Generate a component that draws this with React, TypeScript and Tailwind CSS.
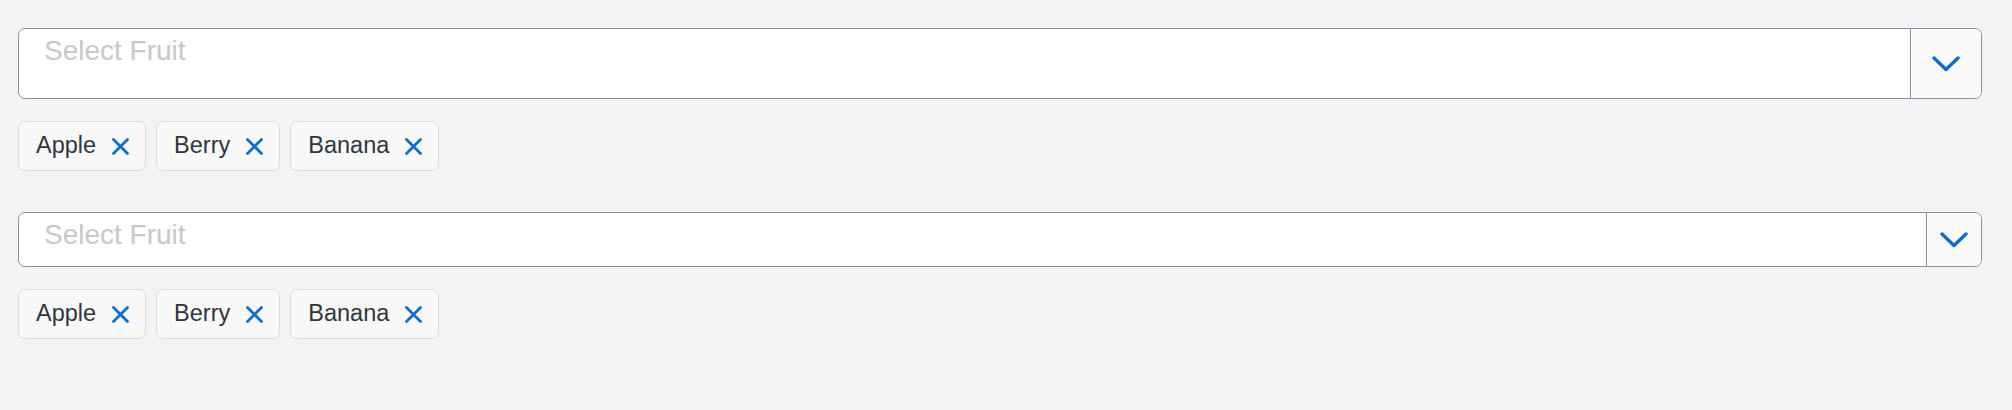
import React from "react";

const fruits = ["Apple", "Berry", "Banana"];

function Chevron() {
  return (
    <svg width="28" height="16" viewBox="0 0 28 16" fill="none">
      <path d="M2 2 L14 13.5 L26 2" stroke="#0a6ed1" strokeWidth="3.4" strokeLinecap="round" strokeLinejoin="round" />
    </svg>
  );
}

function Cross() {
  return (
    <svg width="17" height="17" viewBox="0 0 17 17" fill="none">
      <path d="M1.5 1.5 L15.5 15.5 M15.5 1.5 L1.5 15.5" stroke="#0a6ed1" strokeWidth="2.8" strokeLinecap="round" />
    </svg>
  );
}

function Tokens() {
  return (
    <div className="flex gap-[10px]">
      {fruits.map((f) => (
        <div
          key={f}
          className="flex h-[50px] items-center gap-[16px] rounded-[7px] border-[1.5px] border-[#d9dadc] bg-[#f8f8f9] pl-[17px] pr-[16px] text-[23.5px] text-[#32363a]"
        >
          <span>{f}</span>
          <Cross />
        </div>
      ))}
    </div>
  );
}

function Select({ tall }: { tall: boolean }) {
  return (
    <div
      className={
        tall
          ? "flex h-[71px] overflow-hidden rounded-[7px] border-[1.5px] border-[#89919a] bg-white"
          : "flex h-[55px] overflow-hidden rounded-[7px] border-[1.5px] border-[#89919a] bg-white"
      }
    >
      <div className="flex-1 pl-[25px] pt-[5px] text-[28px] leading-[34px] text-[#c5c8cc]">Select Fruit</div>
      <div
        className={
          tall
            ? "flex w-[71px] items-center justify-center border-l-[1.5px] border-[#89919a] bg-[#fafafa] pt-[1px]"
            : "flex w-[55px] items-center justify-center border-l-[1.5px] border-[#89919a] bg-[#fafafa] pt-[1px]"
        }
      >
        <Chevron />
      </div>
    </div>
  );
}

export default function App() {
  return (
    <div
      className="h-[410px] w-[2012px] bg-[#f2f3f5] pl-[18px] pr-[30px] pt-[28px]"
      style={{ fontFamily: '"Liberation Sans", Arial, sans-serif' }}
    >
      <Select tall />
      <div className="mt-[22px]">
        <Tokens />
      </div>
      <div className="mt-[41px]">
        <Select tall={false} />
      </div>
      <div className="mt-[22px]">
        <Tokens />
      </div>
    </div>
  );
}
